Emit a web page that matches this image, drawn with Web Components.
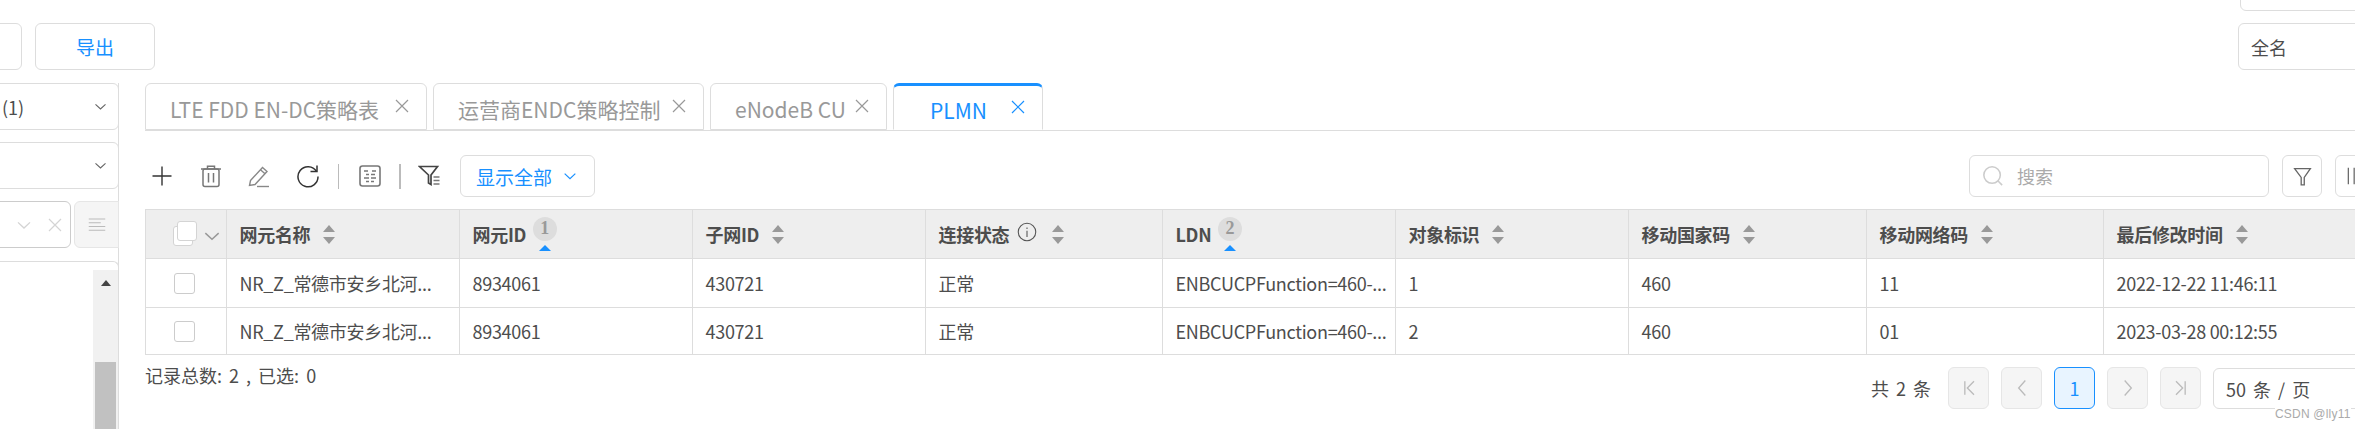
<!DOCTYPE html>
<html lang="zh">
<head>
<meta charset="utf-8">
<title>PLMN</title>
<style>
  html, body { margin: 0; height: 100%; overflow: hidden; background: #fff; }
  body { font-family: "Noto Sans CJK SC", "Liberation Sans", sans-serif; color: #4d4d4d; }
</style>
</head>
<body>
<app-page></app-page>
<script>
// all icons use a 24 box, drawn to fit the reference
const ICONS = {
  plus: '<path d="M12 2.5v19M2.5 12h19" stroke="#333" stroke-width="1.4" fill="none"/>',
  trash: '<g stroke="#777" stroke-width="1.5" fill="none"><path d="M2 5h20M8.5 5V2.2h7V5"/><rect x="4" y="5" width="16" height="17.5" rx="2"/><path d="M9.5 9v9.5M14.5 9v9.5"/></g>',
  pencil: '<g stroke="#888" stroke-width="1.4" fill="none"><path d="M3.5 16.5 15.5 3.5l4.5 4L8 20.5l-5.5 1z"/><path d="M13.5 5.8l4.5 4"/><path d="M10 22.5h12"/></g>',
  refresh: '<g stroke="#333" stroke-width="1.5" fill="none"><path d="M20.5 7.5A10 10 0 1 0 22 12.5"/><path d="M14.5 7.5h6.5V1.5"/></g>',
  book: '<g stroke="#777" fill="none"><rect x="2" y="2" width="20" height="20" rx="2.5" stroke-width="1.6"/><path d="M6 7h4M14 7h4M8 10.5h3M13 10.5h4M6 14h5M13 14h5M8 17.5h3M13 17.5h3" stroke-width="1.3"/></g>',
  funnelList: '<g stroke="#444" fill="none"><path d="M1.5 2.5h18L13 11v9.5l-2.5-1.5V11z" stroke-width="1.7"/><path d="M15.5 13h6M15.5 16.5h6M15.5 20h6" stroke="#777" stroke-width="1.5"/></g>',
  funnel: '<path d="M3 3h18l-7 10v8.5h-3.5V13z" stroke="#666" stroke-width="1.5" fill="none"/>',
  search: '<g stroke="#ccc" stroke-width="1.7" fill="none"><circle cx="11" cy="11" r="9"/><path d="M17.5 17.5l4.5 4.5"/></g>',
  chevron: '<path d="M4 8.5l8 7.5 8-7.5" stroke="currentColor" stroke-width="1.8" fill="none"/>',
  close: '<path d="M4 4l16 16M20 4 4 20" stroke="currentColor" stroke-width="1.6" fill="none"/>',
  info: '<g stroke="#555" stroke-width="1.3" fill="none"><circle cx="12" cy="12" r="10.5"/><path d="M12 10.5v7.5"/><path d="M12 6.5v2"/></g>',
  first: '<path d="M7 4v16M18 4l-8 8 8 8" stroke="#bbb" stroke-width="1.6" fill="none"/>',
  prev: '<path d="M16 3l-8 9 8 9" stroke="#bbb" stroke-width="1.6" fill="none"/>',
  next: '<path d="M8 3l8 9-8 9" stroke="#bbb" stroke-width="1.6" fill="none"/>',
  last: '<path d="M17 4v16M6 4l8 8-8 8" stroke="#bbb" stroke-width="1.6" fill="none"/>',
  alignLeft: '<path d="M1 4h22M1 9h16M1 14h22M1 19h22" stroke="#bbb" stroke-width="1.6" fill="none"/>',
  columns: '<path d="M4 2v20M11 2v20" stroke="#666" stroke-width="1.5" fill="none"/>'
};

class UiIcon extends HTMLElement {
  connectedCallback() {
    const size = this.getAttribute('size') || 24;
    this.attachShadow({ mode: 'open' }).innerHTML = `
      <style>
        :host { display: inline-flex; flex: none; width: ${size}px; height: ${size}px; }
        svg { width: 100%; height: 100%; display: block; }
      </style>
      <svg viewBox="0 0 24 24">${ICONS[this.getAttribute('name')]}</svg>`;
  }
}

class UiButton extends HTMLElement {
  constructor() {
    super();
    this.attachShadow({ mode: 'open' }).innerHTML = `
      <style>
        :host {
          display: inline-flex; align-items: center; justify-content: center; box-sizing: border-box;
          flex: none; border: 1px solid #ddd; border-radius: 6px; background: #fff;
          color: #1890ff; font-size: 19px; height: 42px;
        }
        :host([disabled]) { background: #f5f5f5; border-color: #e6e6e6; }
        :host([active]) { background: #e8f4ff; border-color: #1890ff; }
      </style>
      <slot></slot>`;
  }
}

class UiSelect extends HTMLElement {
  constructor() {
    super();
    this.attachShadow({ mode: 'open' }).innerHTML = `
      <style>
        :host {
          display: flex; align-items: center; box-sizing: border-box; height: 47px; padding: 0 10px 0 12px;
          border: 1px solid #ddd; border-radius: 6px; background: #fff; color: #4d4d4d; font-size: 18px;
        }
        .text { flex: 1; white-space: nowrap; }
        ui-icon { color: #666; }
      </style>
      <span class="text"><slot></slot></span>
      <ui-icon name="chevron" size="15"></ui-icon>`;
  }
}

class UiTab extends HTMLElement {
  constructor() {
    super();
    this.attachShadow({ mode: 'open' }).innerHTML = `
      <style>
        :host {
          display: flex; align-items: center; box-sizing: border-box; height: 47px; flex: none;
          padding: 0 15px 0 24px; margin-bottom: -1px; background: #fff; color: #999; font-size: 21px;
          white-space: nowrap;
          border: 1px solid #ddd; border-radius: 6px 6px 0 0;
        }
        :host([active]) {
          color: #1890ff; border-top: 3px solid #1890ff; border-bottom-color: #fff; padding-left: 36px;
        }
        .text { flex: 1; padding-top: 5px; }
        ui-icon { margin-top: -1px; }
      </style>
      <span class="text"><slot></slot></span>
      <ui-icon name="close" size="18"></ui-icon>`;
  }
}

class SortMark extends HTMLElement {
  connectedCallback() {
    const order = this.getAttribute('order');
    this.attachShadow({ mode: 'open' }).innerHTML = `
      <style>
        :host { display: inline-flex; flex-direction: column; align-items: center; flex: none; }
        .up, .down { width: 0; height: 0; border-left: 6.5px solid transparent; border-right: 6.5px solid transparent; }
        .up { border-bottom: 7px solid #999; }
        .down { border-top: 7px solid #999; margin-top: 5px; }
        .badge {
          width: 24px; height: 24px; border-radius: 50%; background: #ddd; color: #999;
          font: bold 18px/22px "Liberation Serif", serif; text-align: center; margin-bottom: 4px;
        }
        .active { border-bottom: 6px solid #1890ff; }
      </style>
      ${order
        ? `<div class="badge">${order}</div><div class="up active"></div>`
        : `<div class="up"></div><div class="down"></div>`}`;
  }
}

const COLUMNS = [
  { name: '网元名称', width: 233 },
  { name: '网元ID', width: 233, order: 1 },
  { name: '子网ID', width: 233 },
  { name: '连接状态', width: 237, info: true },
  { name: 'LDN', width: 233, order: 2 },
  { name: '对象标识', width: 233 },
  { name: '移动国家码', width: 238 },
  { name: '移动网络码', width: 237 },
  { name: '最后修改时间', width: 300 }
];

const ROWS = [
  ['NR_Z_常德市安乡北河...', '8934061', '430721', '正常', 'ENBCUCPFunction=460-...', '1', '460', '11', '2022-12-22 11:46:11'],
  ['NR_Z_常德市安乡北河...', '8934061', '430721', '正常', 'ENBCUCPFunction=460-...', '2', '460', '01', '2023-03-28 00:12:55']
];

class DataTable extends HTMLElement {
  connectedCallback() {
    const head = COLUMNS.map(c => `
      <div class="cell head">
        <span>${c.name}</span>
        ${c.info ? '<ui-icon name="info" size="20" class="info"></ui-icon>' : ''}
        <sort-mark ${c.order ? `order="${c.order}" class="badged"` : ''}></sort-mark>
      </div>`).join('');
    const rows = ROWS.map(r => `
      <div class="cell check"><span class="box"></span></div>
      ${r.map(v => `<div class="cell">${v}</div>`).join('')}`).join('');
    this.attachShadow({ mode: 'open' }).innerHTML = `
      <style>
        :host {
          display: grid; box-sizing: border-box; margin-right: -100px;
          grid-template-columns: 81px ${COLUMNS.map(c => c.width + 'px').join(' ')};
          grid-template-rows: 49px 49px 47px;
          border-top: 1px solid #ddd; border-left: 1px solid #ddd;
          font-size: 18px; letter-spacing: -.3px; color: #4d4d4d;
        }
        .cell {
          display: flex; align-items: center; box-sizing: border-box; padding-left: 12.5px; white-space: nowrap;
          border-right: 1px solid #ddd; border-bottom: 1px solid #ddd;
        }
        .head { background: #eee; font-weight: 700; gap: 13px; }
        .head sort-mark.badged { margin-left: -6.5px; }
        .head .info { margin: -4px 2px 0 -5px; }
        .check { justify-content: flex-start; padding-left: 28px; }
        .box { width: 19px; height: 19px; border: 1px solid #ccc; border-radius: 3px; background: #fff; }
        .all { position: relative; background: #eee; padding: 0; color: #999; }
        .all .back, .all .front {
          position: absolute; box-sizing: border-box; width: 20px; height: 20px;
          border: 1px solid #d4d4d4; border-radius: 3px;
        }
        .all .back { left: 27px; top: 16px; background: #fff; }
        .all .front { left: 31px; top: 11px; background: #fff; }
        .all ui-icon { position: absolute; left: 56px; top: 16px; }
      </style>
      <div class="cell all">
        <span class="back"></span><span class="front"></span>
        <ui-icon name="chevron" size="20"></ui-icon>
      </div>
      ${head}
      ${rows}`;
  }
}

class LeftPanel extends HTMLElement {
  constructor() {
    super();
    this.attachShadow({ mode: 'open' }).innerHTML = `
      <style>
        :host {
          display: flex; flex-direction: column; flex: none; box-sizing: border-box; width: 119px; height: 346px;
          border-right: 1px solid #ddd;
        }
        ui-select { margin: 0 -1px 12px -200px; }
        ui-select.first { margin-left: -11px; }
        .group { display: flex; gap: 3px; height: 47px; margin: 0 -1px 13px -200px; }
        .input {
          flex: 1; display: flex; align-items: center; justify-content: flex-end; gap: 13px; padding-right: 6px;
          border: 1px solid #ccc; border-radius: 6px; color: #d4d4d4;
        }
        .side {
          width: 45px; flex: none; box-sizing: border-box; display: flex; align-items: center; justify-content: center;
          background: #f5f5f5; border: 1px solid #e6e6e6; border-radius: 6px 0 0 6px;
        }
        .list {
          flex: 1; display: flex; justify-content: flex-end; margin: 0 -1px 0 -200px;
          border: 1px solid #ddd; border-bottom: 0; border-radius: 6px 6px 0 0;
        }
        .scroll { width: 25px; margin-top: 8px; background: #f1f1f1; display: flex; flex-direction: column; align-items: center; }
        .arrow {
          width: 0; height: 0; margin-top: 10px; border-left: 5.5px solid transparent; border-right: 5.5px solid transparent;
          border-bottom: 6px solid #444;
        }
        .thumb { width: 21px; flex: 1; margin-top: 76px; background: #c1c1c1; }
      </style>
      <ui-select class="first">(1)</ui-select>
      <ui-select></ui-select>
      <div class="group">
        <div class="input">
          <ui-icon name="chevron" size="18"></ui-icon>
          <ui-icon name="close" size="18"></ui-icon>
        </div>
        <div class="side"><ui-icon name="alignLeft" size="18"></ui-icon></div>
      </div>
      <div class="list"><div class="scroll"><div class="arrow"></div><div class="thumb"></div></div></div>`;
  }
}

class TableToolbar extends HTMLElement {
  constructor() {
    super();
    this.attachShadow({ mode: 'open' }).innerHTML = `
      <style>
        :host { display: flex; align-items: center; height: 42px; padding-left: 5px; margin-right: -40px; }
        .tools { display: flex; align-items: center; gap: 24.5px; }
        .sep { width: 1px; height: 25px; background: #bbb; flex: none; }
        .sep.a { margin: 0 19px 0 18px; }
        .sep.b { width: 2px; margin: 0 17px 0 17px; }
        .show { width: 135px; gap: 10px; margin-left: 18px; }
        .show ui-icon { color: #1890ff; }
        .search {
          margin-left: auto; width: 300px; height: 42px; box-sizing: border-box; display: flex; align-items: center; gap: 13px;
          padding-left: 12px; border: 1px solid #ddd; border-radius: 6px; color: #aaa; font-size: 18px;
        }
        .square { width: 40px; margin-left: 13px; }
        .wide { width: 60px; justify-content: flex-start; padding-left: 9px; }
      </style>
      <div class="tools">
        <ui-icon name="plus"></ui-icon>
        <ui-icon name="trash"></ui-icon>
        <ui-icon name="pencil"></ui-icon>
        <ui-icon name="refresh"></ui-icon>
      </div>
      <span class="sep a"></span>
      <ui-icon name="book"></ui-icon>
      <span class="sep b"></span>
      <ui-icon name="funnelList"></ui-icon>
      <ui-button class="show">显示全部<ui-icon name="chevron" size="16"></ui-icon></ui-button>
      <div class="search"><ui-icon name="search" size="22"></ui-icon><span>搜索</span></div>
      <ui-button class="square"><ui-icon name="funnel" size="21"></ui-icon></ui-button>
      <ui-button class="square wide"><ui-icon name="columns" size="20"></ui-icon></ui-button>`;
  }
}

class TableFooter extends HTMLElement {
  constructor() {
    super();
    this.attachShadow({ mode: 'open' }).innerHTML = `
      <style>
        :host {
          display: flex; align-items: flex-start; padding-top: 12px; margin-right: -60px;
          font-size: 18px; color: #4d4d4d; word-spacing: 3px;
        }
        .count { line-height: 16px; }
        .total { margin-left: auto; margin-right: 17px; line-height: 42px; white-space: pre; }
        ui-button { width: 41px; margin-right: 12px; color: #1890ff; font-size: 18px; }
        .size {
          display: flex; align-items: center; box-sizing: border-box; width: 202px; height: 41px; padding-left: 12px; margin-top: 1px;
          border: 1px solid #ddd; border-radius: 6px; white-space: pre;
        }
      </style>
      <span class="count">记录总数: 2 , 已选: 0</span>
      <span class="total">共 2 条</span>
      <ui-button disabled><ui-icon name="first" size="20"></ui-icon></ui-button>
      <ui-button disabled><ui-icon name="prev" size="20"></ui-icon></ui-button>
      <ui-button active>1</ui-button>
      <ui-button disabled><ui-icon name="next" size="20"></ui-icon></ui-button>
      <ui-button disabled><ui-icon name="last" size="20"></ui-icon></ui-button>
      <div class="size">50 条 / 页</div>`;
  }
}

class AppPage extends HTMLElement {
  constructor() {
    super();
    this.attachShadow({ mode: 'open' }).innerHTML = `
      <style>
        :host { display: block; position: relative; width: 2355px; height: 429px; overflow: hidden; }
        .top { display: flex; align-items: flex-start; height: 60px; padding-top: 23px; }
        .top ui-button { height: 47px; }
        .cut { width: 42px; margin-left: -20px; }
        .export { width: 120px; margin-left: 13px; }
        .right { margin: -59px -120px 0 auto; width: 237px; display: flex; flex-direction: column; gap: 12px; }
        .right ui-select:first-child { margin-left: 2px; }
        .main { display: flex; }
        .content { flex: 1; min-width: 0; padding-left: 26px; }
        .tabs { display: flex; gap: 6px; height: 47px; border-bottom: 1px solid #ddd; }
        table-toolbar { margin-top: 24px; margin-bottom: 12px; }
        .mark {
          position: absolute; left: 2275px; top: 406px; color: #aaa; font: 12px/16px "Liberation Sans", sans-serif;
          letter-spacing: .2px; background: #fff; white-space: nowrap;
        }
      </style>
      <div class="top">
        <ui-button class="cut"></ui-button>
        <ui-button class="export">导出</ui-button>
        <div class="right">
          <ui-select></ui-select>
          <ui-select>全名</ui-select>
        </div>
      </div>
      <div class="main">
        <left-panel></left-panel>
        <div class="content">
          <div class="tabs">
            <ui-tab style="width:282px">LTE FDD EN-DC策略表</ui-tab>
            <ui-tab style="width:271px">运营商ENDC策略控制</ui-tab>
            <ui-tab style="width:177px">eNodeB CU</ui-tab>
            <ui-tab style="width:150px" active>PLMN</ui-tab>
          </div>
          <table-toolbar></table-toolbar>
          <data-table></data-table>
          <table-footer></table-footer>
        </div>
      </div>
      <div class="mark">CSDN @lly11</div>`;
  }
}

customElements.define('ui-icon', UiIcon);
customElements.define('ui-button', UiButton);
customElements.define('ui-select', UiSelect);
customElements.define('ui-tab', UiTab);
customElements.define('sort-mark', SortMark);
customElements.define('data-table', DataTable);
customElements.define('left-panel', LeftPanel);
customElements.define('table-toolbar', TableToolbar);
customElements.define('table-footer', TableFooter);
customElements.define('app-page', AppPage);
</script>
</body>
</html>
